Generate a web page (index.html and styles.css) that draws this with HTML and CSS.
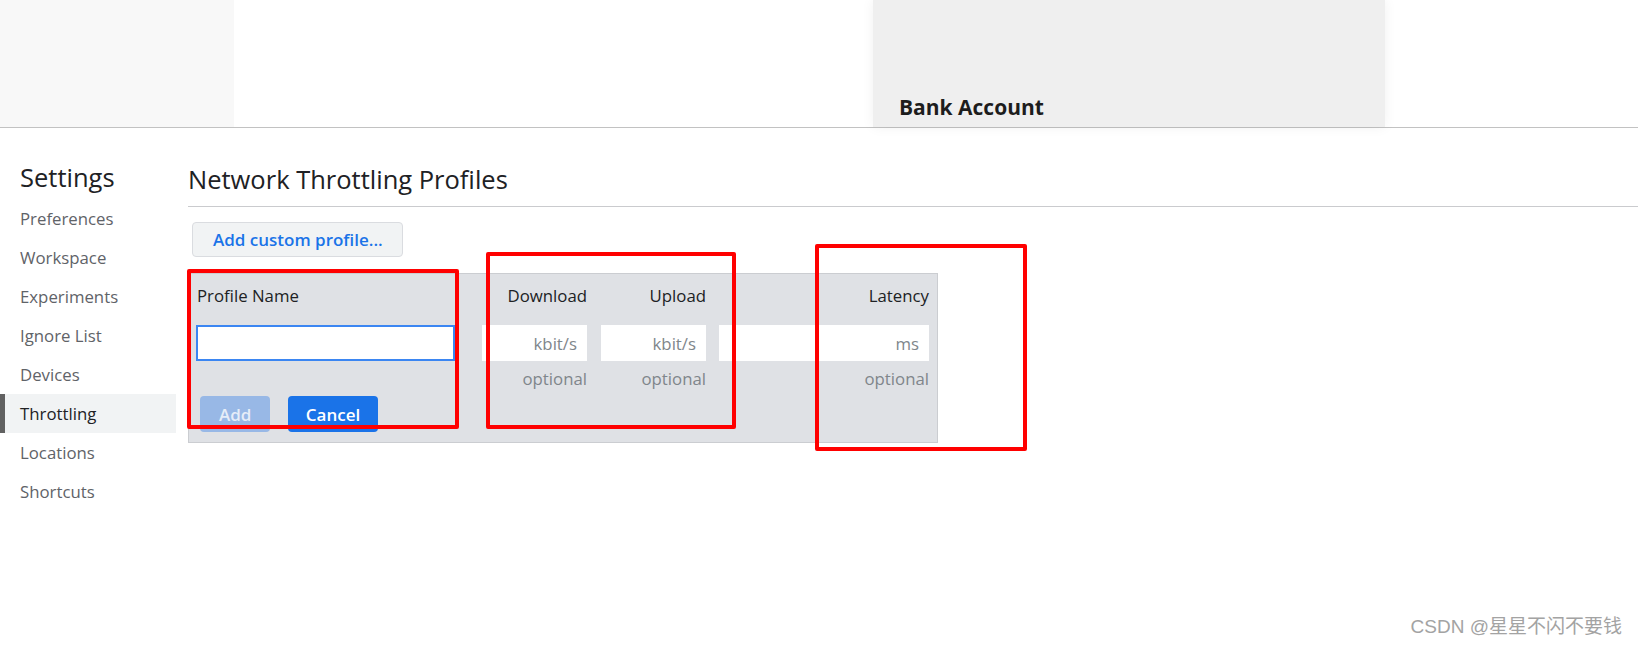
FILE: index.html
```html
<!DOCTYPE html>
<html lang="en">
<head>
<meta charset="utf-8">
<title>Network Throttling Profiles</title>
<link rel="stylesheet" href="styles.css">
</head>
<body>
<div class="top">
  <div class="top-left"></div>
  <div class="card"><span class="card-title">Bank Account</span></div>
</div>
<div class="settings">
  <nav class="sidebar">
    <div class="sidebar-title">Settings</div>
    <div class="nav-item">Preferences</div>
    <div class="nav-item">Workspace</div>
    <div class="nav-item">Experiments</div>
    <div class="nav-item">Ignore List</div>
    <div class="nav-item">Devices</div>
    <div class="nav-item nav-item-selected">Throttling</div>
    <div class="nav-item">Locations</div>
    <div class="nav-item">Shortcuts</div>
  </nav>
  <main class="main">
    <h1 class="heading">Network Throttling Profiles</h1>
    <button class="add-btn">Add custom profile...</button>
    <div class="editor">
      <div class="fields">
        <div class="field field-name">
          <div class="field-label">Profile Name</div>
          <input class="input input-focus" type="text">
          <div class="hint"></div>
        </div>
        <div class="field field-num field-download">
          <div class="field-label">Download</div>
          <input class="input" type="text" placeholder="kbit/s">
          <div class="hint">optional</div>
        </div>
        <div class="field field-num field-upload">
          <div class="field-label">Upload</div>
          <input class="input" type="text" placeholder="kbit/s">
          <div class="hint">optional</div>
        </div>
        <div class="field field-num field-latency">
          <div class="field-label">Latency</div>
          <input class="input" type="text" placeholder="ms">
          <div class="hint">optional</div>
        </div>
      </div>
      <div class="buttons">
        <button class="btn btn-disabled">Add</button>
        <button class="btn btn-primary">Cancel</button>
      </div>
    </div>
  </main>
</div>
<div class="annot annot-1"></div>
<div class="annot annot-2"></div>
<div class="annot annot-3"></div>
<div class="watermark">CSDN @星星不闪不要钱</div>
</body>
</html>
```

FILE: styles.css
```css
* { box-sizing: border-box; }

html, body {
  margin: 0;
  padding: 0;
  background: #ffffff;
}

body {
  width: 1638px;
  height: 649px;
  overflow: hidden;
  position: relative;
  font-family: "Open Sans", "Noto Sans", sans-serif;
  color: #202124;
}

/* ---------- top strip ---------- */
.top {
  display: flex;
  height: 128px;
  border-bottom: 1px solid #c2c2c2;
}

.top-left {
  width: 234px;
  background: #f8f8f8;
}

.card {
  margin-left: 639px;
  width: 512px;
  background: #efefef;
  box-shadow: 0 0 12px rgba(0, 0, 0, 0.06);
  display: flex;
  align-items: flex-end;
  padding: 0 0 6px 26px;
}

.card-title {
  font-size: 21px;
  font-weight: 700;
  line-height: 28px;
  color: #1d1d1d;
}

/* ---------- settings ---------- */
.settings {
  display: flex;
}

.sidebar {
  width: 176px;
  flex-shrink: 0;
  padding-top: 32px;
}

.sidebar-title {
  font-size: 25.5px;
  line-height: 34px;
  padding-left: 20px;
  margin-bottom: 5px;
  color: #202124;
}

.nav-item {
  height: 39px;
  line-height: 39px;
  font-size: 16.8px;
  padding-left: 20px;
  color: #5f6368;
}

.nav-item-selected {
  background: #f1f3f4;
  color: #202124;
  box-shadow: inset 5px 0 0 #616161;
}

.main {
  flex: 1;
  margin-left: 12px;
  padding-top: 34px;
}

.heading {
  margin: 0;
  font-size: 25.5px;
  font-weight: 400;
  line-height: 34px;
  padding-bottom: 10px;
  border-bottom: 1px solid #cacbce;
  color: #202124;
}

.add-btn {
  display: block;
  margin: 15px 0 0 4px;
  height: 35px;
  padding: 0 19px 0 20px;
  border: 1px solid #dadce0;
  border-radius: 4px;
  background: #f1f3f4;
  color: #1a73e8;
  font-family: "Open Sans", sans-serif;
  font-size: 17px;
  font-weight: 600;
}

.editor {
  margin-top: 16px;
  width: 750px;
  background: #dfe1e5;
  border: 1px solid #cbcdd1;
  padding: 11px 8px 10px 7px;
}

.fields {
  display: flex;
}

.field {
  display: flex;
  flex-direction: column;
}

.field-name { width: 259px; }
.field-download { width: 105px; margin-left: 27px; }
.field-upload { width: 105px; margin-left: 14px; }
.field-latency { width: 210px; margin-left: 13px; }

.field-label {
  font-size: 16.8px;
  line-height: 22px;
  color: #202124;
}

.field-name .field-label {
  padding-left: 1px;
}

.field-num .field-label,
.field-num .hint {
  text-align: right;
}

.input {
  margin-top: 18px;
  height: 36px;
  width: 100%;
  border: none;
  background: #ffffff;
  font-family: "Open Sans", sans-serif;
  font-size: 16.8px;
  text-align: right;
  padding: 0 10px 0 4px;
  outline: none;
}

.input::placeholder {
  color: #80868b;
}

.input-focus {
  border: 2px solid #3b86f2;
  text-align: left;
}

.hint {
  margin-top: 7px;
  height: 22px;
  font-size: 16.8px;
  line-height: 22px;
  color: #80868b;
}

.buttons {
  display: flex;
  gap: 18px;
  margin-top: 6px;
  padding-left: 4px;
}

.btn {
  height: 36px;
  padding: 0 19px;
  border: none;
  border-radius: 4px;
  font-family: "Open Sans", sans-serif;
  font-size: 17px;
  font-weight: 600;
}

.btn-disabled {
  width: 70px;
  background: #98b8e6;
  color: #e6edf8;
}

.btn-primary {
  width: 90px;
  background: #1a73e8;
  color: #ffffff;
  padding: 0;
}

/* ---------- screenshot annotations ---------- */
.annot {
  position: absolute;
  border: 4px solid #ff0000;
  border-radius: 2px;
}

.annot-1 { left: 187px; top: 269px; width: 272px; height: 160px; }
.annot-2 { left: 486px; top: 252px; width: 250px; height: 177px; }
.annot-3 { left: 815px; top: 244px; width: 212px; height: 207px; }

.watermark {
  position: absolute;
  right: 16px;
  top: 616px;
  font-family: "Liberation Sans", "Noto Sans CJK SC", sans-serif;
  font-size: 19px;
  line-height: 21px;
  color: #a3a3a3;
  text-shadow: 0 0 1px #ffffff;
  white-space: nowrap;
}
```
